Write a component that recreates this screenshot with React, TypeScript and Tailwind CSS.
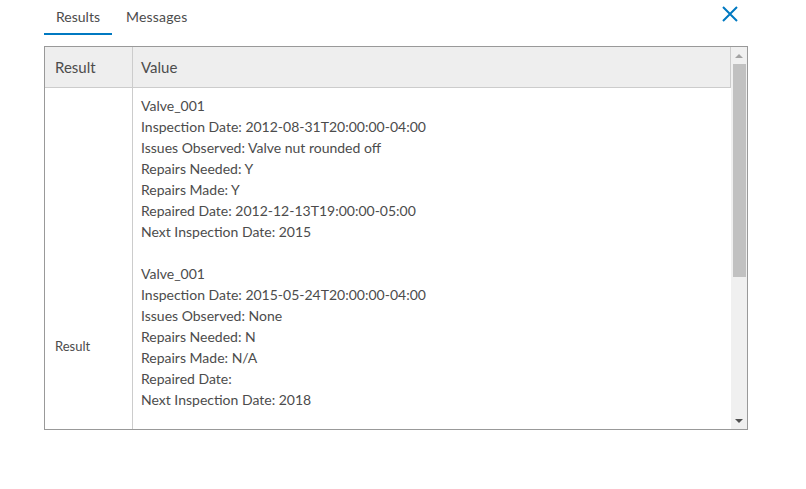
import React from 'react';

type Inspection = {
    name: string;
    inspectionDate: string;
    issues: string;
    repairsNeeded: string;
    repairsMade: string;
    repairedDate: string;
    nextInspection: string;
};

const inspections: Inspection[] = [
    {
        name: 'Valve_001',
        inspectionDate: '2012-08-31T20:00:00-04:00',
        issues: 'Valve nut rounded off',
        repairsNeeded: 'Y',
        repairsMade: 'Y',
        repairedDate: '2012-12-13T19:00:00-05:00',
        nextInspection: '2015',
    },
    {
        name: 'Valve_001',
        inspectionDate: '2015-05-24T20:00:00-04:00',
        issues: 'None',
        repairsNeeded: 'N',
        repairsMade: 'N/A',
        repairedDate: '',
        nextInspection: '2018',
    },
];

const App: React.FC = () => {
    return (
        <div className="w-[806px] h-[489px] bg-white text-[#4c4c4c] font-['Lato','Liberation_Sans',sans-serif]">
            <div className="ml-[44px] w-[704px]">
                {/* Tabs */}
                <div className="flex items-start justify-between">
                    <div className="flex gap-[2px]">
                        <div className="px-[12px] pt-[7px] pb-[6px] text-[14px] leading-[20px] border-b-2 border-[#0079c1]">Results</div>
                        <div className="px-[12px] pt-[7px] pb-[6px] text-[14px] leading-[20px] border-b-2 border-transparent tracking-[0.2px]">Messages</div>
                    </div>
                    <button className="mr-[10px] mt-[6px] w-[16px] h-[16px] flex items-center justify-center">
                        <svg width="16" height="16" viewBox="0 0 16 16" fill="none" stroke="#0079c1" strokeWidth="2">
                            <path d="M1 1 L15 15 M15 1 L1 15" />
                        </svg>
                    </button>
                </div>

                {/* Results table */}
                <div className="mt-[11px] h-[384px] border border-[#999] flex">
                    <div className="flex-1 overflow-hidden">
                        <div className="flex h-[41px] bg-[#eee] border-b border-[#ccc] border-r text-[15px]">
                            <div className="w-[88px] border-r border-[#ccc] pl-[10px] flex items-center">Result</div>
                            <div className="flex-1 pl-[8px] flex items-center">Value</div>
                        </div>
                        <div className="flex h-[518px]">
                            <div className="w-[88px] border-r border-[#ccc] pl-[10px] flex items-center text-[13px]">Result</div>
                            <div className="flex-1 pl-[8px] pt-[7px] text-[14px] leading-[21px]">
                                {inspections.map((r, i) => (
                                    <div key={i} className={i > 0 ? 'mt-[21px]' : ''}>
                                        <div>{r.name}</div>
                                        <div>Inspection Date: {r.inspectionDate}</div>
                                        <div>Issues Observed: {r.issues}</div>
                                        <div>Repairs Needed: {r.repairsNeeded}</div>
                                        <div>Repairs Made: {r.repairsMade}</div>
                                        <div>Repaired Date: {r.repairedDate}</div>
                                        <div>Next Inspection Date: {r.nextInspection}</div>
                                    </div>
                                ))}
                            </div>
                        </div>
                    </div>

                    {/* scrollbar */}
                    <div className="w-[16px] bg-[#f0f0f0] flex flex-col items-center">
                        <div className="h-[17px] flex items-center justify-center">
                            <div className="w-0 h-0 border-l-[4px] border-r-[4px] border-b-[4px] border-l-transparent border-r-transparent border-b-[#a3a3a3]" />
                        </div>
                        <div className="w-[13px] h-[213px] bg-[#c1c1c1]" />
                        <div className="flex-1" />
                        <div className="h-[17px] flex items-center justify-center">
                            <div className="w-0 h-0 border-l-[4px] border-r-[4px] border-t-[4px] border-l-transparent border-r-transparent border-t-[#505050]" />
                        </div>
                    </div>
                </div>
            </div>
        </div>
    );
};

export default App;
